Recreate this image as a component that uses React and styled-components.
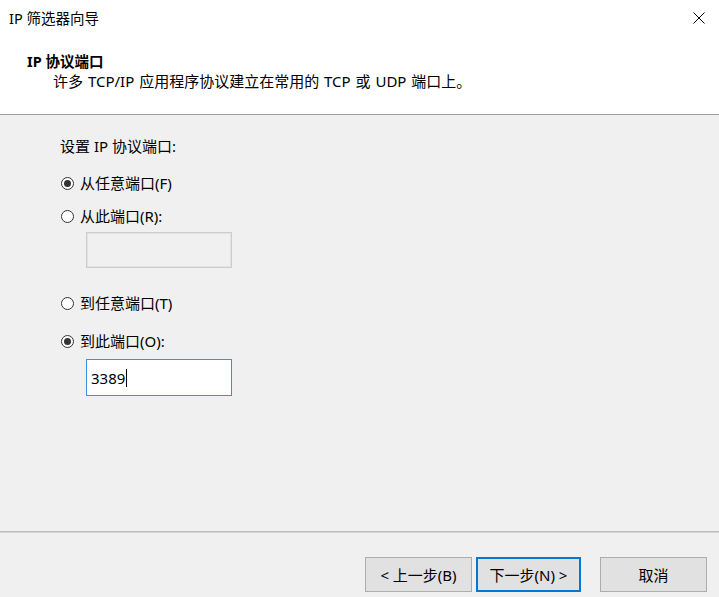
import React from "react";
import styled, { createGlobalStyle } from "styled-components";

const Global = createGlobalStyle`
  html, body { margin: 0; padding: 0; }
  body {
    font-family: "Noto Sans", "Noto Sans CJK SC", sans-serif;
    font-size: 15px;
    color: #000;
    background: #f0f0f0;
  }
  #root { width: 719px; height: 597px; }
`;

const Window = styled.div`
  width: 719px;
  height: 597px;
  display: flex;
  flex-direction: column;
  background: #f0f0f0;
  overflow: hidden;
`;

const TitleBar = styled.div`
  height: 36px;
  display: flex;
  align-items: center;
  justify-content: space-between;
  padding: 0 14px 0 9px;
  background: #fff;
  font-size: 14.5px;
  line-height: 20px;
`;

const CloseIcon = styled.svg`
  width: 12px;
  height: 12px;
  display: block;
`;

const Header = styled.div`
  background: #fff;
  border-bottom: 1px solid #a0a0a0;
  padding: 15px 0 0 27px;
  box-sizing: content-box;
  height: 63px;
`;

const HeaderTitle = styled.div`
  font-weight: 700;
  line-height: 20px;
  font-size: 14.5px;
`;

const HeaderSub = styled.div`
  line-height: 20px;
  padding-left: 26px;
  font-size: 15px;
  word-spacing: 1px;
`;

const Body = styled.div`
  flex: 1;
  padding: 21px 0 0 60px;
  display: flex;
  flex-direction: column;
  align-items: flex-start;
`;

const Label = styled.div`
  line-height: 20px;
  font-size: 15px;
`;

const RadioRow = styled.label`
  display: flex;
  align-items: center;
  gap: 6px;
  height: 20px;
  line-height: 20px;
  margin-top: ${(p) => p.$mt}px;
  margin-left: 1px;
  font-size: 15px;
`;

const RadioCircle = styled.span`
  width: 13px;
  height: 13px;
  box-sizing: border-box;
  border: 1px solid #333;
  border-radius: 50%;
  background: #fff;
  display: flex;
  align-items: center;
  justify-content: center;
  &::after {
    content: "";
    width: 7px;
    height: 7px;
    border-radius: 50%;
    background: #333;
    display: ${(p) => (p.$checked ? "block" : "none")};
  }
`;

const TextBox = styled.div`
  margin-top: ${(p) => p.$mt}px;
  margin-left: 26px;
  width: 146px;
  height: ${(p) => p.$h}px;
  box-sizing: border-box;
  border: 1px solid ${(p) => (p.$active ? "#3d8ee4" : "#cccccc")};
  background: ${(p) => (p.$active ? "#fff" : "#f0f0f0")};
  box-shadow: ${(p) => (p.$active ? "none" : "inset 0 0 0 1px #e3e3e3")};
  display: flex;
  align-items: center;
  padding-left: 4px;
  font-size: 15px;
`;

const Caret = styled.span`
  display: inline-block;
  width: 1px;
  height: 18px;
  background: #000;
  margin-left: 1px;
`;

const Separator = styled.div`
  height: 1px;
  background: #bcbcbc;
  border-bottom: 1px solid #d6d6d6;
`;

const Footer = styled.div`
  height: 64px;
  display: flex;
  justify-content: flex-end;
  align-items: flex-start;
  padding: 24px 12px 0 0;
  box-sizing: border-box;
`;

const Button = styled.button`
  width: ${(p) => p.$w || 107}px;
  height: 35px;
  margin-left: ${(p) => p.$ml || 0}px;
  background: #e1e1e1;
  border: ${(p) => (p.$default ? "2px solid #0078d7" : "1px solid #adadad")};
  font-family: "Noto Sans", "Noto Sans CJK SC", sans-serif;
  font-size: 15px;
  color: #000;
  padding: 0;
  display: flex;
  align-items: center;
  justify-content: center;
`;

export default function App() {
  return (
    <>
      <Global />
      <Window>
        <TitleBar>
          <span>IP 筛选器向导</span>
          <CloseIcon viewBox="0 0 12 12">
            <path d="M0.5 0.5 L11.5 11.5 M11.5 0.5 L0.5 11.5" stroke="#000" strokeWidth="1" fill="none" />
          </CloseIcon>
        </TitleBar>
        <Header>
          <HeaderTitle>IP 协议端口</HeaderTitle>
          <HeaderSub>许多 TCP/IP 应用程序协议建立在常用的 TCP 或 UDP 端口上。</HeaderSub>
        </Header>
        <Body>
          <Label>设置 IP 协议端口:</Label>
          <RadioRow $mt={17}>
            <RadioCircle $checked />
            从任意端口(F)
          </RadioRow>
          <RadioRow $mt={13}>
            <RadioCircle />
            从此端口(R):
          </RadioRow>
          <TextBox $mt={6} $h={36} />
          <RadioRow $mt={25}>
            <RadioCircle />
            到任意端口(T)
          </RadioRow>
          <RadioRow $mt={18}>
            <RadioCircle $checked />
            到此端口(O):
          </RadioRow>
          <TextBox $mt={8} $h={37} $active>
            3389<Caret />
          </TextBox>
        </Body>
        <Separator />
        <Footer>
          <Button>&lt; 上一步(B)</Button>
          <Button $w={105} $ml={4} $default>下一步(N) &gt;</Button>
          <Button $ml={19}>取消</Button>
        </Footer>
      </Window>
    </>
  );
}
